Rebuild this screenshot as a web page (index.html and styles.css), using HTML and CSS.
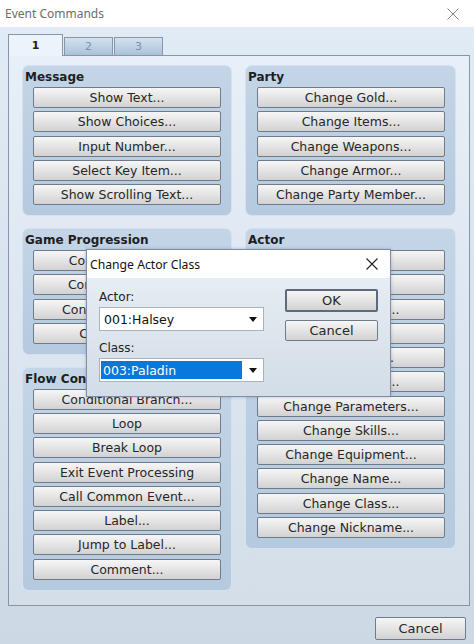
FILE: index.html
```html
<!DOCTYPE html>
<html>
<head>
<meta charset="utf-8">
<link rel="stylesheet" href="styles.css">
</head>
<body>
<div class="window">
  <div class="titlebar">
    <span class="title">Event Commands</span>
    <svg class="close" width="12" height="12" viewBox="0 0 12 12"><path d="M0.5 0.5 L11.5 11.5 M11.5 0.5 L0.5 11.5" stroke="#8a8a8a" stroke-width="1"/></svg>
  </div>
  <div class="body">
    <div class="tabs">
      <div class="tab active">1</div>
      <div class="tab">2</div>
      <div class="tab">3</div>
    </div>
    <div class="panel">
      <div class="col left">
        <div class="group">
          <div class="glabel">Message</div>
          <div class="btns">
            <div class="btn">Show Text...</div>
            <div class="btn">Show Choices...</div>
            <div class="btn">Input Number...</div>
            <div class="btn">Select Key Item...</div>
            <div class="btn">Show Scrolling Text...</div>
          </div>
        </div>
        <div class="group">
          <div class="glabel">Game Progression</div>
          <div class="btns">
            <div class="btn">Control Switches...</div>
            <div class="btn">Control Variables...</div>
            <div class="btn">Control Self Switch...</div>
            <div class="btn">Control Timer...</div>
          </div>
        </div>
        <div class="group">
          <div class="glabel">Flow Control</div>
          <div class="btns">
            <div class="btn">Conditional Branch...</div>
            <div class="btn">Loop</div>
            <div class="btn">Break Loop</div>
            <div class="btn">Exit Event Processing</div>
            <div class="btn">Call Common Event...</div>
            <div class="btn">Label...</div>
            <div class="btn">Jump to Label...</div>
            <div class="btn">Comment...</div>
          </div>
        </div>
      </div>
      <div class="col right">
        <div class="group">
          <div class="glabel">Party</div>
          <div class="btns">
            <div class="btn">Change Gold...</div>
            <div class="btn">Change Items...</div>
            <div class="btn">Change Weapons...</div>
            <div class="btn">Change Armor...</div>
            <div class="btn">Change Party Member...</div>
          </div>
        </div>
        <div class="group">
          <div class="glabel">Actor</div>
          <div class="btns">
            <div class="btn">Change HP...</div>
            <div class="btn">Change MP...</div>
            <div class="btn">Change State...</div>
            <div class="btn">Recover All...</div>
            <div class="btn">Change EXP...</div>
            <div class="btn">Change Level...</div>
            <div class="btn">Change Parameters...</div>
            <div class="btn">Change Skills...</div>
            <div class="btn">Change Equipment...</div>
            <div class="btn">Change Name...</div>
            <div class="btn">Change Class...</div>
            <div class="btn">Change Nickname...</div>
          </div>
        </div>
      </div>
    </div>
    <div class="footer">
      <div class="btn footbtn">Cancel</div>
    </div>
  </div>

  <div class="dialog">
    <div class="dtitlebar">
      <span class="dtitle">Change Actor Class</span>
      <svg class="dclose" width="12" height="12" viewBox="0 0 12 12"><path d="M0.5 0.5 L11.5 11.5 M11.5 0.5 L0.5 11.5" stroke="#222" stroke-width="1.1"/></svg>
    </div>
    <div class="dbody">
      <div class="fields">
        <div class="flabel">Actor:</div>
        <div class="combo">
          <span class="cval">001:Halsey</span>
          <span class="arrowbox"><span class="arrow"></span></span>
        </div>
        <div class="flabel second">Class:</div>
        <div class="combo">
          <span class="cval sel">003:Paladin</span>
          <span class="arrowbox"><span class="arrow"></span></span>
        </div>
      </div>
      <div class="dbtns">
        <div class="btn dbtn default">OK</div>
        <div class="btn dbtn">Cancel</div>
      </div>
    </div>
  </div>
</div>
</body>
</html>
```

FILE: styles.css
```css
* { box-sizing: border-box; }
html, body { margin: 0; padding: 0; }
body { width: 474px; height: 644px; overflow: hidden; background: #fff; }

.window {
  position: relative;
  width: 474px;
  height: 644px;
  display: flex;
  flex-direction: column;
}

.titlebar {
  height: 27px;
  background: #ffffff;
  display: flex;
  align-items: center;
  justify-content: space-between;
  padding: 0 15px 0 5px;
}
.title {
  font-family: "Noto Sans", "Open Sans", sans-serif;
  font-size: 12px;
  color: #6d6d6d;
}
.close { display: block; }

.body {
  flex: 1;
  background: linear-gradient(#e1ebf6, #ccd9e5);
  padding: 7px 4px 0 8px;
  display: flex;
  flex-direction: column;
}

.tabs {
  display: flex;
  height: 21px;
  align-items: flex-end;
  position: relative;
  z-index: 1;
}
.tab {
  width: 49px;
  height: 18px;
  margin-right: 1px;
  border: 1px solid #8796a8;
  border-bottom: none;
  background: linear-gradient(#d3e2ef, #a9c2d9);
  font-family: "DejaVu Sans", Verdana, sans-serif;
  font-size: 11px;
  color: #7a90a8;
  display: flex;
  align-items: center;
  justify-content: center;
}
.tab.active {
  width: 55px;
  height: 22px;
  background: #ecf3fa;
  color: #222;
  font-weight: bold;
  margin-bottom: -1px;
}

.panel {
  height: 551px;
  width: 462px;
  border: 1px solid #8796a8;
  background: linear-gradient(#e7eff8, #d3dee9);
  display: flex;
  gap: 13px;
  padding: 9px 13px 0 13px;
}
.col {
  display: flex;
  flex-direction: column;
  gap: 12px;
}
.col.left { width: 210px; }
.col.right { width: 211px; }
.col.right .group { padding-left: 11px; }

.group {
  border-radius: 7px;
  background: linear-gradient(#c3d5e7, #b5cade);
  border: 1px solid #d4e2ef;
  padding: 0 10px 10px 10px;
}
.glabel {
  font-family: "DejaVu Sans", Verdana, sans-serif;
  font-weight: bold;
  font-size: 12px;
  color: #1e1e1e;
  height: 21px;
  line-height: 22px;
  margin-left: -8px;
}
.col.right .glabel { margin-left: -9px; }
.btns {
  display: flex;
  flex-direction: column;
  gap: 3.25px;
}
.btn {
  height: 21px;
  flex: 0 0 21px;
  border: 1px solid #6f7b8a;
  border-radius: 2px;
  background: linear-gradient(#f6f6f6, #e6e6e6 45%, #d2d2d2);
  font-family: "DejaVu Sans", Verdana, sans-serif;
  font-size: 12.5px;
  color: #262626;
  display: flex;
  align-items: center;
  justify-content: center;
  white-space: nowrap;
  overflow: hidden;
}

.footer {
  flex: 1;
  display: flex;
  justify-content: flex-end;
  align-items: flex-start;
  padding: 11px 4px 0 0;
}
.footbtn {
  width: 91px;
  height: 23px;
  flex: 0 0 91px;
  font-size: 13px;
}

.dialog {
  position: absolute;
  left: 86px;
  top: 249px;
  width: 305px;
  height: 148px;
  border: 1px solid #7f8cae;
  background: linear-gradient(#eaf0f6, #d3dde7);
  display: flex;
  flex-direction: column;
  box-shadow: 0 0 3px rgba(80, 90, 110, 0.35);
}
.dtitlebar {
  height: 28px;
  background: #fff;
  display: flex;
  align-items: center;
  justify-content: space-between;
  padding: 0 12px 0 3px;
}
.dtitle {
  font-family: "Noto Sans", "Open Sans", sans-serif;
  font-size: 12.2px;
  color: #111;
}
.dbody {
  display: flex;
  padding: 11px 11px 0 12px;
  gap: 21px;
}
.fields { width: 165px; display: flex; flex-direction: column; }
.flabel {
  font-family: "DejaVu Sans", Verdana, sans-serif;
  font-size: 12px;
  color: #222;
  height: 18px;
  line-height: 16px;
}
.flabel.second { margin-top: 9px; }
.combo {
  height: 24px;
  background: #fff;
  border: 1px solid #a9b3be;
  display: flex;
  align-items: center;
  padding: 2px 0 2px 1px;
}
.cval {
  flex: 1;
  height: 18px;
  font-family: "DejaVu Sans", Verdana, sans-serif;
  font-size: 12.5px;
  color: #111;
  display: flex;
  align-items: center;
  padding-left: 3px;
}
.cval.sel {
  background: #0a78d8;
  color: #fff;
  flex: 0 0 141px;
  padding-left: 2px;
}
.arrowbox {
  margin-left: auto;
  width: 20px;
  display: flex;
  justify-content: center;
  align-items: center;
}
.arrow {
  width: 0; height: 0;
  border-left: 4px solid transparent;
  border-right: 4px solid transparent;
  border-top: 5px solid #111;
}
.dbtns {
  display: flex;
  flex-direction: column;
  gap: 8px;
}
.dbtn {
  width: 93px;
  height: 21px;
  flex-basis: 21px;
  font-size: 13px;
}
.dbtn.default {
  height: 23px;
  flex-basis: 23px;
  border: 2px solid #5c6a7c;
}
```
